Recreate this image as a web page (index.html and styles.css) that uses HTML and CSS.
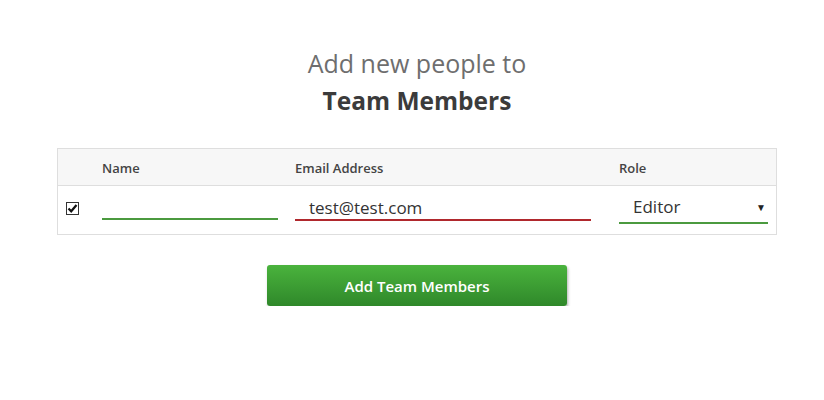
FILE: index.html
```html
<!DOCTYPE html>
<html>
<head>
<meta charset="utf-8">
<link rel="stylesheet" href="styles.css">
</head>
<body>
<div class="page">
  <div class="title">
    <div class="title-sub">Add new people to</div>
    <div class="title-main">Team Members</div>
  </div>
  <div class="table">
    <div class="row head">
      <div class="cell"></div>
      <div class="cell">Name</div>
      <div class="cell">Email Address</div>
      <div class="cell">Role</div>
    </div>
    <div class="row body">
      <div class="cell check-cell">
        <span class="checkbox">
          <svg width="11" height="11" viewBox="0 0 11 11"><path d="M1.5 5.5 L4.2 8.3 L9.5 2" fill="none" stroke="#111" stroke-width="2.2"/></svg>
        </span>
      </div>
      <div class="cell"><div class="field name-field"></div></div>
      <div class="cell"><div class="field email-field">test@test.com</div></div>
      <div class="cell"><div class="field role-field"><span>Editor</span><span class="caret">▼</span></div></div>
    </div>
  </div>
  <div class="actions">
    <button class="btn">Add Team Members</button>
  </div>
</div>
</body>
</html>
```

FILE: styles.css
```css
html, body {
  margin: 0;
  padding: 0;
  background: #ffffff;
}
body {
  font-family: "Open Sans", "Noto Sans", sans-serif;
  color: #444;
}
.page {
  width: 720px;
  margin-left: 57px;
  padding-top: 44px;
}
.title {
  text-align: center;
}
.title-sub {
  font-size: 25px;
  color: #6e6e6e;
  line-height: 38px;
}
.title-main {
  font-size: 24.5px;
  font-weight: 700;
  color: #3b3b3b;
  line-height: 38px;
}
.table {
  margin-top: 28px;
  border: 1px solid #dedede;
}
.row {
  display: grid;
  grid-template-columns: 44px 193px 324px 1fr;
}
.head {
  height: 37px;
  box-sizing: border-box;
  padding-top: 1px;
  background: #f7f7f7;
  border-bottom: 1px solid #dedede;
  font-size: 13px;
  font-weight: 600;
  color: #444;
  align-items: center;
}
.body {
  height: 48px;
}
.check-cell {
  display: flex;
  padding-left: 8px;
  padding-top: 16px;
}
.checkbox {
  width: 11px;
  height: 11px;
  border: 1px solid #333;
  display: flex;
  align-items: center;
  justify-content: center;
  background: #fff;
}
.field {
  box-sizing: border-box;
}
.name-field {
  width: 176px;
  height: 34px;
  border-bottom: 2px solid #4b9a3f;
}
.email-field {
  width: 296px;
  height: 35px;
  border-bottom: 2px solid #b0282d;
  font-size: 17px;
  color: #333;
  padding-left: 14px;
  padding-top: 11px;
  line-height: 22px;
}
.role-field {
  width: 149px;
  height: 38px;
  border-bottom: 2px solid #4b9a3f;
  font-size: 17px;
  color: #333;
  padding-left: 14px;
  padding-right: 2px;
  padding-top: 10px;
  line-height: 22px;
  display: flex;
  justify-content: space-between;
}
.caret {
  font-size: 10px;
  color: #222;
}
.actions {
  display: flex;
  justify-content: center;
  margin-top: 30px;
}
.btn {
  width: 300px;
  height: 41px;
  border: none;
  border-radius: 3px;
  background: linear-gradient(#4ab33d, #2f882a);
  color: #fff;
  font-family: "Open Sans", "Noto Sans", sans-serif;
  font-size: 15px;
  font-weight: 600;
  box-shadow: 1px 2px 3px rgba(0,0,0,0.3);
  padding: 0;
}
```
